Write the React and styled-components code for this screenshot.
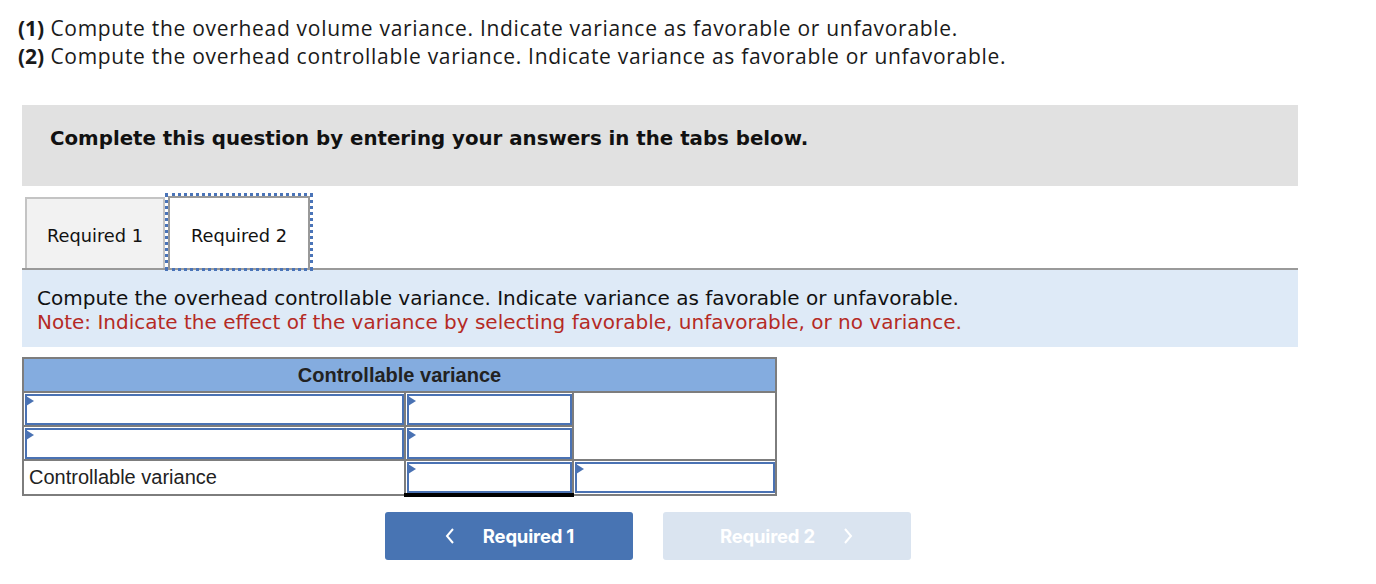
import React from 'react';
import styled, { createGlobalStyle } from 'styled-components';

const GlobalStyle = createGlobalStyle`
  body {
    margin: 0;
    background: #fff;
    font-family: "Liberation Sans", Arial, sans-serif;
    color: #1a1a1a;
  }
`;

const Page = styled.div`
  padding: 14px 78px 24px 22px;
  width: 1276px;
`;

const Intro = styled.div`
  font-family: "Open Sans", "Liberation Sans", Arial, sans-serif;
  font-size: 21px;
  line-height: 28px;
  letter-spacing: 0.7px;
  margin-left: -4px;
  color: #1a1a1a;
  b {
    font-weight: 700;
    letter-spacing: 0;
  }
`;

const Banner = styled.div`
  margin-top: 35px;
  height: 81px;
  box-sizing: border-box;
  background: #e1e1e1;
  padding: 21px 0 0 28px;
  font-family: "DejaVu Sans", Verdana, sans-serif;
  font-weight: 700;
  font-size: 19.8px;
  line-height: 26px;
  color: #111;
`;

const TabBar = styled.div`
  margin-top: 8px;
  display: flex;
  align-items: flex-end;
  padding-left: 3px;
  border-bottom: 2px solid #9a9a9a;
  height: 74px;
`;

const Tab = styled.button`
  font-family: "DejaVu Sans", Verdana, sans-serif;
  font-size: 17.8px;
  color: #111;
  border: 2px solid ${(p) => (p.$active ? '#999' : '#c4c4c4')};
  border-bottom: none;
  background: ${(p) => (p.$active ? '#fff' : '#f2f2f2')};
  width: ${(p) => (p.$active ? '142px' : '140px')};
  height: ${(p) => (p.$active ? '72px' : '71px')};
  margin-left: ${(p) => (p.$active ? '3px' : '0')};
  outline: ${(p) => (p.$active ? '3px dotted #4a74b8' : 'none')};
  outline-offset: 0;
  padding: 4px 0 0;
  cursor: pointer;
`;

const Instructions = styled.div`
  background: #deeaf7;
  height: 77px;
  padding: 16px 15px 0;
  box-sizing: border-box;
  font-family: "DejaVu Sans", Verdana, sans-serif;
  font-size: 20px;
  line-height: 24px;
  color: #111;
`;

const Note = styled.div`
  color: #b52a25;
`;

const Grid = styled.table`
  margin-top: 10px;
  border-collapse: collapse;
  border: 2px solid #7d7d7d;
  width: 753px;
  table-layout: fixed;
`;

const HeadCell = styled.th`
  background: #84acdf;
  height: 32px;
  border: 2px solid #7d7d7d;
  font-family: "Liberation Sans", Arial, sans-serif;
  font-size: 20px;
  font-weight: 700;
  color: #222;
  padding: 0;
`;

const Cell = styled.td`
  border: 2px solid #7d7d7d;
  padding: 0;
  height: 32px;
  vertical-align: middle;
  border-top-color: ${(p) => (p.$total ? '#000' : '#7d7d7d')};
  border-bottom: ${(p) => (p.$total ? '4px solid #000' : '2px solid #7d7d7d')};
  background: #fff;
`;

const LabelCell = styled(Cell)`
  font-family: "Liberation Sans", Arial, sans-serif;
  font-size: 20px;
  color: #222;
  padding-left: 5px;
`;

const InputBox = styled.div`
  position: relative;
  height: 31px;
  margin: 0 0 0 1px;
  border: 2px solid #4a72b3;
  box-sizing: border-box;
  background: #fff;
  &::before {
    content: '';
    position: absolute;
    left: -1px;
    top: 0;
    border-left: 8px solid #4a72b3;
    border-top: 5px solid transparent;
    border-bottom: 5px solid transparent;
  }
`;

const Nav = styled.div`
  margin-top: 15px;
  display: flex;
  gap: 30px;
  padding-left: 363px;
`;

const NavButton = styled.button`
  width: 248px;
  height: 48px;
  border: none;
  border-radius: 3px;
  background: ${(p) => (p.$disabled ? '#dae4f0' : '#4874b3')};
  color: #fff;
  font-family: "Inter", "Liberation Sans", Arial, sans-serif;
  font-weight: 700;
  font-size: 18.5px;
  letter-spacing: -0.2px;
  display: flex;
  align-items: center;
  justify-content: center;
  gap: 27px;
  padding: 0;
  cursor: ${(p) => (p.$disabled ? 'default' : 'pointer')};
  svg {
    display: block;
  }
`;

const Chevron = ({ dir }) => (
  <svg width="12" height="18" viewBox="0 0 12 18">
    <path
      d={dir === 'left' ? 'M9 2 L3 9 L9 16' : 'M3 2 L9 9 L3 16'}
      fill="none"
      stroke="#fff"
      strokeWidth="2"
    />
  </svg>
);

export default function App() {
  return (
    <>
      <GlobalStyle />
      <Page>
        <Intro>
          <b>(1)</b> Compute the overhead volume variance. Indicate variance as favorable or unfavorable.
          <br />
          <b>(2)</b> Compute the overhead controllable variance. Indicate variance as favorable or unfavorable.
        </Intro>
        <Banner>Complete this question by entering your answers in the tabs below.</Banner>
        <TabBar>
          <Tab>Required 1</Tab>
          <Tab $active>Required 2</Tab>
        </TabBar>
        <Instructions>
          Compute the overhead controllable variance. Indicate variance as favorable or unfavorable.
          <Note>Note: Indicate the effect of the variance by selecting favorable, unfavorable, or no variance.</Note>
        </Instructions>
        <Grid>
          <colgroup>
            <col style={{ width: 382 }} />
            <col style={{ width: 168 }} />
            <col style={{ width: 203 }} />
          </colgroup>
          <thead>
            <tr>
              <HeadCell colSpan={3}>Controllable variance</HeadCell>
            </tr>
          </thead>
          <tbody>
            <tr>
              <Cell><InputBox /></Cell>
              <Cell><InputBox /></Cell>
              <Cell rowSpan={2} />
            </tr>
            <tr>
              <Cell><InputBox /></Cell>
              <Cell><InputBox /></Cell>
            </tr>
            <tr>
              <LabelCell>Controllable variance</LabelCell>
              <Cell $total><InputBox /></Cell>
              <Cell><InputBox /></Cell>
            </tr>
          </tbody>
        </Grid>
        <Nav>
          <NavButton>
            <Chevron dir="left" />
            Required 1
          </NavButton>
          <NavButton $disabled disabled>
            Required 2
            <Chevron dir="right" />
          </NavButton>
        </Nav>
      </Page>
    </>
  );
}
